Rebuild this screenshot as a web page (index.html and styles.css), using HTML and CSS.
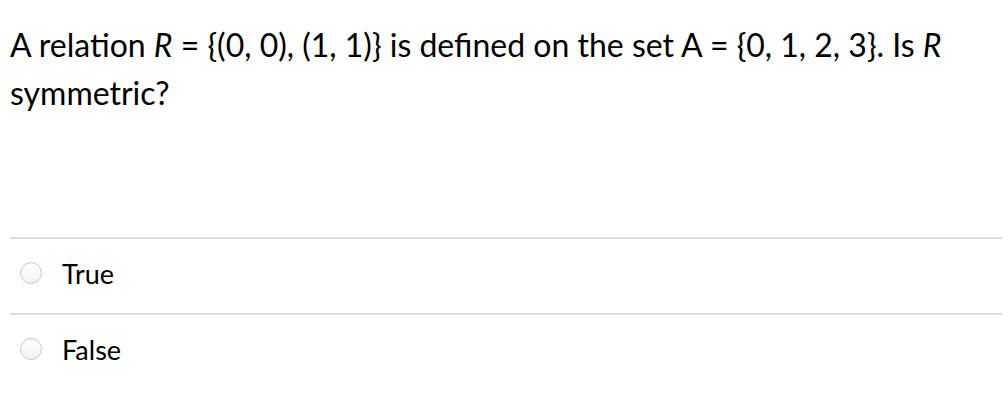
FILE: index.html
```html
<!DOCTYPE html>
<html>
<head>
<meta charset="utf-8">
<link rel="stylesheet" href="styles.css">
</head>
<body>
<div class="question">
  <p class="prompt">A relation <i>R</i> = {(0, 0), (1, 1)} is defined on the set A = {0, 1, 2, 3}. Is <i>R</i> symmetric?</p>
  <div class="answers">
    <label class="answer"><span class="radio"></span><span class="label">True</span></label>
    <label class="answer"><span class="radio"></span><span class="label">False</span></label>
  </div>
</div>
</body>
</html>
```
FILE: styles.css
```css
html, body {
  margin: 0;
  padding: 0;
  background: #ffffff;
}
.question {
  font-family: Lato, "Liberation Sans", sans-serif;
  color: #000000;
  padding: 21px 6px 0 10px;
}
.prompt {
  margin: 0;
  font-size: 32px;
  line-height: 48px;
  width: 960px;
}
.answers {
  margin-top: 120px;
}
.answer {
  display: flex;
  align-items: center;
  height: 68px;
  padding-bottom: 6px;
  border-top: 2px solid #dcdcdc;
  padding-left: 10px;
}
.radio {
  width: 20px;
  height: 20px;
  border-radius: 50%;
  border: 1px solid #c9c9c9;
  background: linear-gradient(#ffffff, #f2f2f2);
  box-shadow: inset 0 1px 1px rgba(0,0,0,0.04);
  flex: none;
}
.label {
  font-size: 27px;
  margin-left: 20px;
}
```
